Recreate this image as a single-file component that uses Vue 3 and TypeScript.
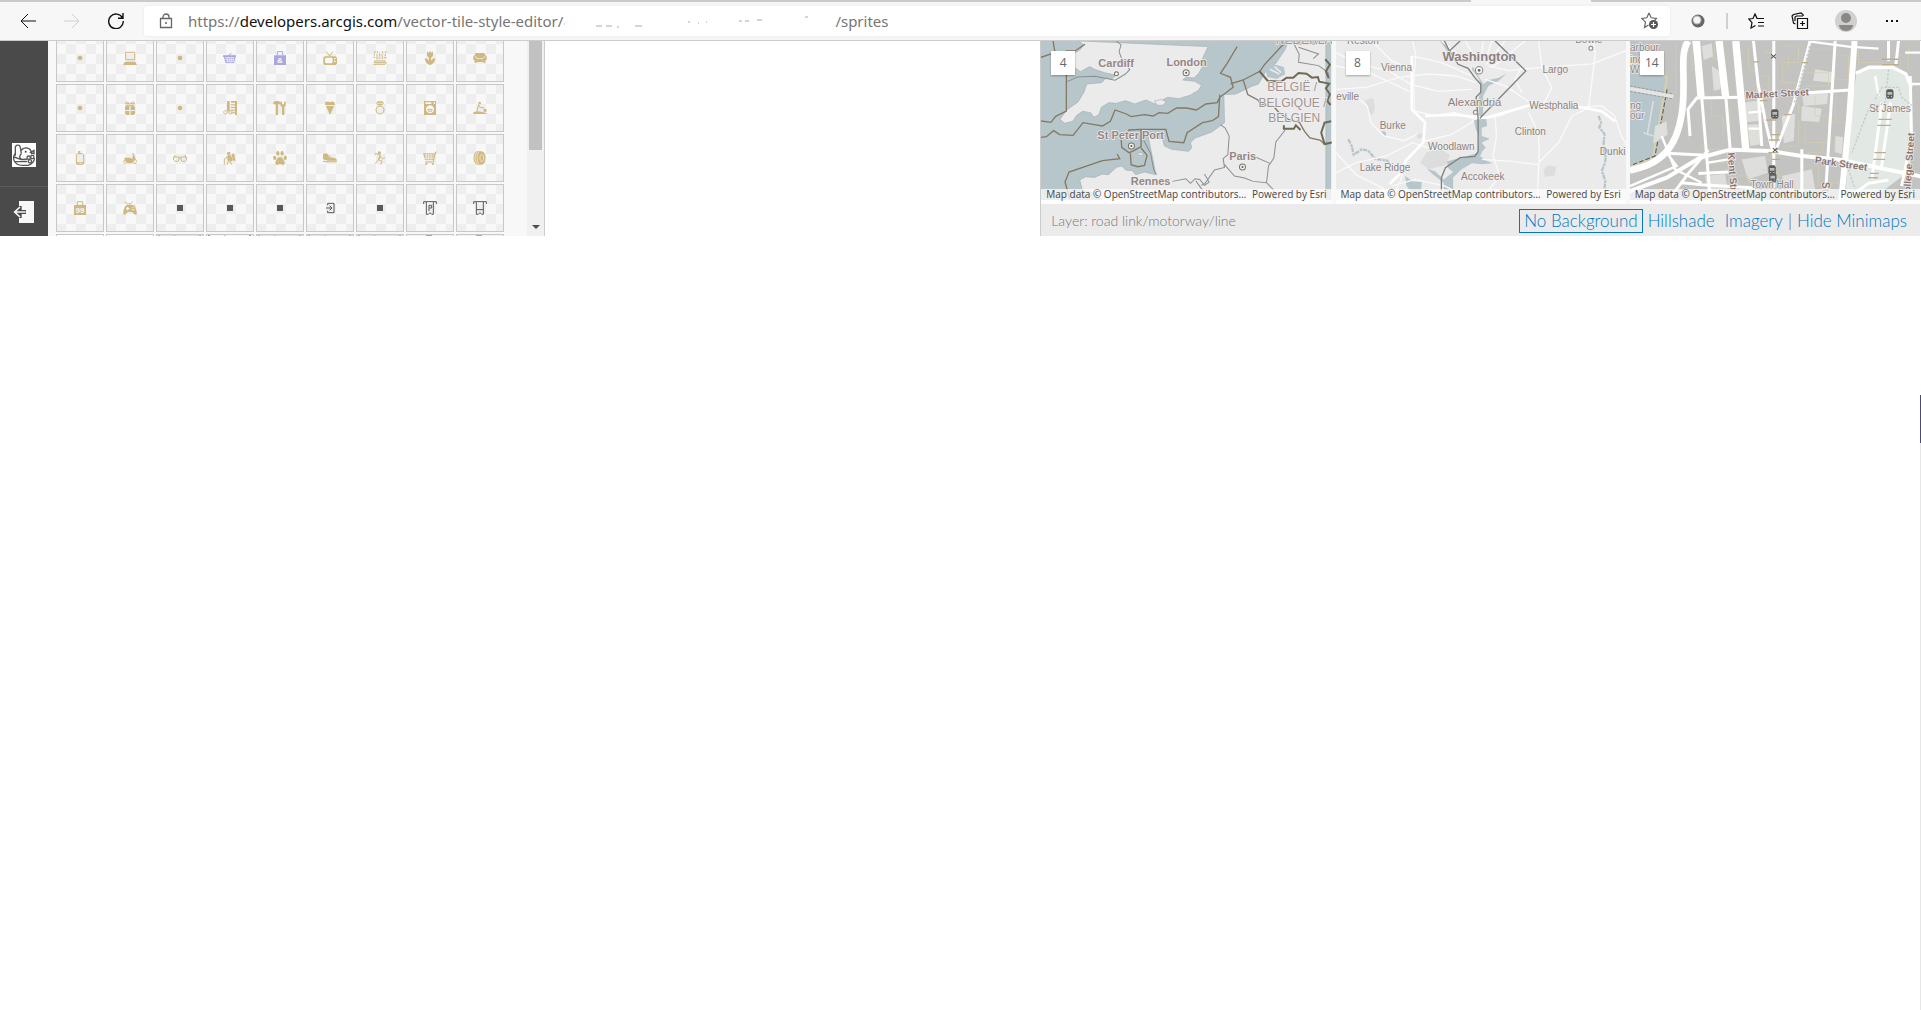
<script setup lang="ts">
interface Glyph {
  name: string
  tone?: string
  fill?: string
  line?: string
  cut?: string
  cutLine?: string
  mark?: string
}

const purple = '#a9a7dc'
const slate = '#595959'

const dot: Glyph = { name: 'dot', fill: 'M21 14a7 7 0 1 0 .1 0z' }
const square: Glyph = { name: 'square', tone: slate, fill: 'M12 12h18v18h-18z' }

const glyphs: Glyph[] = [
  dot,
  { name: 'laptop', line: 'M8 4h27v22h-27z', fill: 'M6 32h30l5 7v3h-40v-3z' },
  dot,
  {
    name: 'basket', tone: purple,
    fill: 'M0 13h39v5h-2l-4 18h-26l-4-18h-3z', line: 'M17 14L25 6',
    cutLine: 'M6 20h27M7 26h25M8 32h23M13 19v15M19 19v15M25 19v15M31 19v15',
  },
  { name: 'shop', tone: purple, fill: 'M3 13h36v29h-36z', line: 'M13 13v-11h16v11', mark: '&' },
  {
    name: 'television',
    fill: 'M5 16h32l5 4v18l-5 4h-32l-4-4v-18z', line: 'M10 2L20 15L29 2',
    cut: 'M9 20h17l3 3v11l-3 3h-17l-3-3v-11zM33 21h5v4h-5zM33 29h5v4h-5z',
  },
  {
    name: 'grill',
    line: 'M2 3h7M13 0v7M18 6h4M29 0v8M34 3h7M4 8v6M9 12h5M20 9v8M25 12h4M37 8v7M1 19h6M12 16v8M17 22h4M28 16v8M33 20h8M4 35h32v-5h-32zM1 40h35l5-6',
  },
  {
    name: 'tulip',
    fill: 'M12 1l5 4 4-5 4 5 5-4v13l-6 6v10c3-5 7-8 13-8c-2 12-7 18-16 20c-9-2-14-8-16-20c6 0 10 3 13 8v-10l-6-6z',
  },
  {
    name: 'sofa',
    fill: 'M8 6h26l4 8h3v12l-4 3v7h-5v-3h-22v3h-5v-7l-4-3v-12h3z',
    cutLine: 'M7 15l5 8h18l5-8',
  },
  dot,
  {
    name: 'gift', fill: 'M9 15h10v12h-13v-9zM23 15h9l4 4v8h-13zM6 30h13v12h-8l-5-5zM23 30h13v8l-5 4h-8z',
    line: 'M20 9c-5-8-12-7-13-1h12M22 9c5-8 12-7 13-1h-12M8 13h26',
  },
  dot,
  {
    name: 'barber', fill: 'M12 0h8v31h-8zM24 0h18v42h-6v-5h-12v-3h12v-5h-12v-3h12v-5h-12v-3h12v-5h-12v-3h12v-5h-12z',
    line: 'M7 29a5 5 0 1 0 .1 0zM22 29a5 5 0 1 0 .1 0z',
  },
  { name: 'tools', fill: 'M1 4l6-4h11l4 6v4h-7v32h-7v-32h-7zM22 1l5 2v7h6v-7l5-2v12l-4 5v24h-7v-24l-5-5z' },
  { name: 'ice-cream', fill: 'M7 12c-3-8 3-14 14-8c9-6 17 0 14 8zM9 15h24l-12 27z' },
  { name: 'ring', line: 'M21 15a12 12 0 1 0 .1 0z', fill: 'M14 1h14l5 5-6 7h-12l-6-7z', cutLine: 'M12 7h18' },
  {
    name: 'washer', fill: 'M3 0h36v42h-36z', cut: 'M7 4h18v5h-18zM32 4h4v5h-4zM21 13a12 12 0 1 0 .1 0z',
    line: 'M14 25h14l-3 6h-8z',
  },
  {
    name: 'massage', fill: 'M20 2a4 4 0 1 0 .1 0zM36 23a5 5 0 1 0 .1 0zM1 33l12-2 16 2 12 4v2h-40z',
    line: 'M17 10L12 30M17 12L22 20L33 20',
  },
  { name: 'phone', line: 'M13 8h16l3 3v26l-3 3h-16l-3-3v-26z', fill: 'M16 0h6v8h-6zM10 34h22v6h-22z', cut: 'M19 36h6v3h-6z' },
  {
    name: 'motorbike', fill: 'M4 20h16l8 3 3-16 5 17-9 13h-12l-9-7z',
    line: 'M7 27a5 5 0 1 0 .1 0zM36 26a6 6 0 1 0 .1 0zM29 6l8 20',
  },
  { name: 'glasses', line: 'M2 20L7 12M40 20L35 12M2 18h16v9l-4 4h-8l-4-4zM24 18h16v9l-4 4h-8l-4-4zM18 20h6' },
  {
    name: 'hiker', fill: 'M17 2a5 5 0 1 0 .1 0zM14 13h10l5 14-6 5-10-4zM26 10l7-3 4 19-7 4z',
    line: 'M15 16L4 25M4 23v18M17 28L12 41M21 30l5 11M33 22l3 8',
  },
  {
    name: 'paw',
    fill: 'M14 0c6-1 8 13 1 13s-7-12-1-13zM28 0c6 1 6 13-1 13s-5-14 1-13zM4 14c6-1 8 12 2 13s-8-12-2-13zM38 14c6 1 4 14-2 13s-4-14 2-13zM21 18c7 0 12 10 14 17c1 7-6 9-10 5h-8c-4 4-11 2-10-5c2-7 7-17 14-17z',
  },
  { name: 'shoe', fill: 'M0 9l11-2 14 12 15 4 2 6h-27l-15-4zM0 29l14 2h28v3h-28l-14-1z', cutLine: 'M15 17l5-4M20 21l5-4' },
  { name: 'runner', fill: 'M19 1a5 5 0 1 0 .1 0z', line: 'M5 13L8 7L23 14L17 26L27 31L23 41M17 26L6 38M20 15l8 8 8-3M21 14L16 25' },
  {
    name: 'cart', fill: 'M0 7h36l-4 20h-26zM10 36a3 3 0 1 0 .1 0zM30 36a3 3 0 1 0 .1 0z', line: 'M41 3h-3l-7 30h-25',
    cutLine: 'M4 12h30M5 18h28M6 23h26M10 8v18M17 8v18M24 8v18',
  },
  {
    name: 'tyre', fill: 'M12 1h15c14 4 14 36 0 40h-15c-14-4-14-36 0-40z',
    cutLine: 'M12 3c-8 8-8 28 0 36M17 3c-6 8-6 28 0 36M26 10c8 2 8 20 0 22c-7-2-7-20 0-22z', line: 'M26 14v14',
  },
  { name: 'sale', fill: 'M3 12h36v30h-36z', line: 'M13 12v-10h16v10', mark: '99' },
  {
    name: 'gamepad', fill: 'M8 14l6-2h14l6 2c5 6 9 20 7 26c-3 3-8 0-13-7h-14c-5 7-10 10-13 7c-2-6 2-20 7-26z',
    line: 'M21 13c0-8-3-4-8-5s-3-6-8-5M22 9c2-5 6-3 7-7', cut: 'M9 21h3v-3h4v3h3v4h-3v3h-4v-3h-3zM29 18h3v4h-3zM26 24h3v4h-3zM32 24h3v4h-3z',
  },
  square,
  square,
  square,
  { name: 'entrance', tone: slate, line: 'M14 13v-6h19v28h-19v-6M9 21h16M20 14l7 7-7 7' },
  square,
  { name: 'parking-sign', tone: slate, line: 'M2 9v-7h38v7M10 3v37h6l5-5 5 5h5v-37M18 30v-17h8v8h-7' },
  { name: 'stop-sign', tone: slate, line: 'M2 9v-7h38v7M10 3v37h6l5-5 5 5h5v-37M10 26h21' },
]

const clipped = ['plain', 'plain', 'road', 'road blue', 'road', 'road', 'road', 'stream', 'stream']

const footerLinks = ['Hillshade', 'Imagery']

const stations = [[468, 220], [813, 160], [460, 388], [462, 411]]
</script>

<template>
  <div class="page">
    <div class="tabstrip"><span class="active-tab"></span></div>
    <header class="toolbar">
      <button class="tool" aria-label="Back">
        <svg width="16" height="16" viewBox="0 0 16 16"><path d="M16 8H1M8 1L1 8l7 7" stroke="#111" /></svg>
      </button>
      <button class="tool" aria-label="Forward" disabled>
        <svg width="16" height="16" viewBox="0 0 16 16"><path d="M0 8h15M8 1l7 7-7 7" stroke="#d0d0d0" /></svg>
      </button>
      <button class="tool" aria-label="Refresh">
        <svg width="16" height="16" viewBox="0 0 16 16"><path d="M14.500 5A7.300 7.300 0 1 0 15.300 8M15 0v5.200H10" stroke="#111" stroke-width="1.400" /></svg>
      </button>
      <div class="address">
        <button class="tool" aria-label="Site information">
          <svg width="14" height="16" viewBox="0 0 14 16">
            <path d="M1.500 5.500h11v9h-11zM4 5.500V4a3 3 0 0 1 6 0v1.500" stroke="#666" stroke-width="1.300" />
            <circle cx="7" cy="10" r="1" fill="#666" />
          </svg>
        </button>
        <div class="url">
          <span>https://<b>developers.arcgis.com</b>/vector-tile-style-editor/</span>
          <svg class="smudge" width="272" height="16" viewBox="0 0 272 16">
            <path d="M1 11h1M33 13h6M43 13h6M54 14h2M72 13h7M125 9h2M135 10h1M143 9h1M176 8h3M182 8h4M194 7h5M242 4h3" stroke="#aaa" />
          </svg>
          <span>/sprites</span>
        </div>
        <button class="tool" aria-label="Add to favorites">
          <svg width="18" height="18" viewBox="0 0 18 18">
            <path d="M8 1l2.200 4.800 5.300.600-2 2M8 1L5.800 5.800.800 6.500l3.700 3.600-1 5.500L7.500 13" stroke="#666" stroke-width="1.200" />
            <circle cx="12.500" cy="12.500" r="4.500" fill="#555" />
            <path d="M12.500 10v5M10 12.500h5" stroke="#fff" stroke-width="1.200" />
          </svg>
        </button>
      </div>
      <button class="tool" aria-label="Extension">
        <svg width="14" height="14" viewBox="0 0 14 14">
          <circle cx="7" cy="7" r="6.500" fill="#666" /><circle cx="6" cy="6" r="4.500" fill="#a8a8a8" />
          <circle cx="6" cy="6" r="3.500" fill="#f4f4f4" />
        </svg>
      </button>
      <span class="separator"></span>
      <button class="tool" aria-label="Favorites">
        <svg width="16" height="16" viewBox="0 0 16 16">
          <path d="M9 5L7 1 5 5.500.800 6l3.200 3.700L3 15l4.500-2.500M7 1l2 4.500h7M10 9.500h6M10 13h6" stroke="#111" stroke-width="1.200" />
        </svg>
      </button>
      <button class="tool" aria-label="Collections">
        <svg width="18" height="18" viewBox="0 0 18 18">
          <path d="M6.500 6.500h10v10h-10zM11.500 9v5M9 11.500h5M4.500 12L2.500 11 1 4l1.500-1.500L10 1l2 1.500.300 1.500M4 9V5l1.500-1H12" stroke="#111" stroke-width="1.200" />
        </svg>
      </button>
      <button class="tool profile" aria-label="Profile">
        <svg width="22" height="22" viewBox="0 0 22 22">
          <circle cx="11" cy="11" r="11" fill="#d2d0ce" /><circle cx="11" cy="8" r="5" fill="#8a8886" />
          <path d="M4 15h14c0 3-3 6-7 6s-7-3-7-6z" fill="#8a8886" />
        </svg>
      </button>
      <button class="tool" aria-label="Settings and more">
        <svg width="14" height="4" viewBox="0 0 14 4"><path d="M1 1h2v2H1zM6 1h2v2H6zM11 1h2v2h-2z" fill="#111" /></svg>
      </button>
    </header>

    <main class="workspace">
      <nav class="rail">
        <button class="rail-button tall" aria-label="Sprites">
          <svg width="24" height="24" viewBox="0 0 72 72">
            <path d="M0 0h72v72H0z" fill="#fff" />
            <g stroke="#555" stroke-width="4">
              <path d="M10 38V14c0-8 14-12 15 0l3 18M28 22c6-10 22-10 28 0l3 12M10 30C-2 48 8 66 30 67h18c12-2 20-14 19-22M6 42l22 8 18-2M28 32c-8 8-6 18 8 18h8M8 56h38M56 28l10-6v10z" />
              <circle cx="50" cy="44" r="5" /><circle cx="61" cy="42" r="5" /><circle cx="54" cy="55" r="5" />
            </g>
            <circle cx="41" cy="26" r="3" fill="#444" />
          </svg>
        </button>
        <button class="rail-button" aria-label="Exit">
          <svg width="22" height="22" viewBox="0 0 66 66">
            <path d="M18 0h45v66H18z" fill="#f8f8f8" />
            <path d="M1 33L18 15h8v12h13v12H26v12h-8z" fill="#4a4a4a" />
            <path d="M38 33H5M21 18L5 33l16 15" stroke="#f8f8f8" stroke-width="5" />
          </svg>
        </button>
      </nav>

      <section class="sprites" aria-label="Sprite list">
        <div class="sprite-view">
          <div class="sprite-grid">
            <button v-for="(g, i) in glyphs" :key="i" class="cell" :aria-label="g.name">
              <svg width="14" height="14" viewBox="0 0 42 42" :style="{ color: g.tone || '#d0b980' }">
                <path v-if="g.fill" :d="g.fill" fill="currentColor" />
                <path v-if="g.cut" :d="g.cut" fill="#f8f8f8" />
                <path v-if="g.line" :d="g.line" stroke="currentColor" stroke-width="3" />
                <path v-if="g.cutLine" :d="g.cutLine" stroke="#f8f8f8" stroke-width="2" />
                <text v-if="g.mark" class="mark" x="21" y="37" text-anchor="middle">{{ g.mark }}</text>
              </svg>
            </button>
            <button v-for="(kind, i) in clipped" :key="kind + i" class="cell" :class="kind" aria-label="sprite"></button>
          </div>
        </div>
        <div class="scrollbar">
          <span class="thumb"></span>
          <svg width="8" height="4" viewBox="0 0 8 4"><path d="M0 0h8L4 4z" fill="#4d4d4d" /></svg>
        </div>
      </section>

      <section class="canvas"></section>

      <section class="maps">
        <div class="minimaps">
          <article class="minimap">
            <svg class="map" viewBox="36 15 870 477" preserveAspectRatio="xMidYMid slice">
              <path d="M36 15h870v477H36z" fill="#b7c6ca" />
              <g fill="#ebebeb" stroke="#a3b0b3" stroke-width="2">
                <path d="M150 15l14 12-10 14-20 12v40l20 14 28-15 14 8 30 10 34 8-10 10-20-2-12 14-45 4-8 24-18 30-34 24-20 28 14 12 24-6 12-18 18-12 24 4 10 14 14-8 8-22 22-14 24 2 26-8 28 10 34-12 26 12 20-10 18-10 34 4 34-10 26-16 8-14-20-12-36-4 10-8 24 2 14-14 10-18-8-14 10-14 16-34z" />
                <path d="M152 432l18-10 26 2 24-10 18 2 24-22 16-4 12 12 20 2 10 12 26-8 34 8-6-34-16-76-2-22 14 22 30 2 6 22 22 10 50 6 10-10-4-16 14-14 50-18 38-28-2-84 36-2 50-24 18-6 22-38 30-24 28-42 6-15h116v477H230l-30-30-40-10z" />
                <path d="M375 196l22-6 14 8-10 10h-16zM325 352l14-2 4 8h-14z" />
              </g>
              <path d="M710 105l24-20 30 8 4 22-26 14-28-6z" fill="#b7c6ca" />
              <path d="M722 100l28 14M736 92l20 18" stroke="#ebebeb" stroke-width="5" />
              <g class="admin">
                <path d="M262 15l14 12-6 20 8 22-8 10 20 4 12 18-14 14-30 18-60-12-52 2-32 14M574 266l14 10 12 24-4 56-14 12 4 26-30 8-28 40-12 6M586 386l30 34 30 6 26 10 40 4 6-50 16-24 6-48 28-36M712 440l20 20 8 30M430 436l40-8 14 14 14-14 14 2 14 18 14-10-14-24M340 305l24 46 10 50 8 14M672 360l50 22M500 434l14 20 20 30M790 15l20 40-2 24 60 10 28 20 4 20M808 34l60 20-16 14" />
              </g>
              <g class="border">
                <path d="M36 64l42-14-6-35M110 45h28l30-20M112 45v180l-32 16-14 18-30-4M36 304l16-2 22-18 18 12 40 2 30-38 34 6 24 4 24-14 14-34 34 12 14 8 40-6 26 4 18-10 26 2 26-16h30l30 6 28-18 34-4 8-16 40-30-8-30-30-12 20-30 18-30 12-20M572 176l-4 66-18 12-30 6-46 30-10 30-44-4-10-36h-76l-34 2-24 22 2 30 22 16 10-4 26-14v-50M336 336l18 22-8 30-20 4-20-6-2-34M264 354l8 14-52 6-100 34-12 30 14 50M604 144l38-12 50-26 14-20 50-54 20-17M642 132l14 44 30 16 10 14 36 4 18 20 30 22 30 6 16 28 16 20 30 6 14 12 26-6" />
              </g>
              <path class="thick-border" d="M690 105l26 30 40 2 16-12h20l16-14 24 2 16 12 18-2 4 14 30 6-10 14 12 18-8 20 10 12M906 256l-20 4-10 30 10 34 20-4M764 268v10h30l6-10 14 14M888 70l14 16-12 20 8 20" />
              <g class="city bold">
                <text x="208" y="92">Cardiff</text><text x="412" y="89">London</text>
                <text x="205" y="308">St Peter Port</text><text x="600" y="371">Paris</text><text x="305" y="448">Rennes</text>
              </g>
              <g class="country">
                <text x="740" y="25">NEDERLAND</text><text x="714" y="166">BELGIË /</text>
                <text x="688" y="212">BELGIQUE /</text><text x="717" y="258">BELGIEN</text>
              </g>
              <g fill="#f4f4f0" stroke="#777466" stroke-width="3">
                <circle cx="262" cy="113" r="6" /><circle cx="471" cy="110" r="9" /><circle cx="307" cy="330" r="9" /><circle cx="640" cy="393" r="9" />
              </g>
              <g fill="#555"><circle cx="471" cy="110" r="3" /><circle cx="307" cy="330" r="3" /><circle cx="640" cy="393" r="3" /></g>
            </svg>
            <span class="zoom-level">4</span>
            <footer class="credit"><span class="source">Map data © OpenStreetMap contributors…</span><span>Powered by Esri</span></footer>
          </article>

          <article class="minimap">
            <svg class="map" viewBox="33 15 870 477" preserveAspectRatio="xMidYMid slice">
              <path d="M33 15h870v477H33z" fill="#ebebeb" />
              <path d="M120 192l24-6 6 30-8 22-12-12zM285 380l20-32 40-10 30 20-14 30-50 12zM655 402l14-14 24 4-4 26-30 4zM270 296l26-6 4 12-20 6z" fill="#dcdddd" />
              <g fill="#b7c6ca">
                <path d="M440 100L462 130L468 160L460 190L462 248L446 252L452 280L462 300L458 350L420 362L366 376L368 395L384 408L356 430L330 406L306 398L322 414L356 440L356 492H384L384 424L410 400L440 382L470 385L502 382L480 372L465 360L472 345L482 335L470 320L494 308L470 300L470 275L486 270L484 250L474 245L474 180L490 150L520 135L545 112L520 126L490 132L475 145L465 128L442 92z" />
                <path d="M345 15h10l18 26-4 8zM240 420l24 16 26 2-2 30-14 24-30-44zM168 284l14 4 2 12-8-2z" />
              </g>
              <path d="M70 310l10 20 6 26 24-16 20 4 20 24 36 6 10 12M820 240l8 20-6 14 16 20-4 40 8 30-4 20-8 20 10 30-2 26" stroke="#b7c6ca" stroke-width="7" stroke-dasharray="14 3 8 2" />
              <g stroke="#fafafa" stroke-width="4">
                <path d="M33 50l60 30 100 26 66 40 80 20 100-6M140 15l60 60 70 30M33 160l90-6 100-30 90-10 80 6 60 20M33 180l70 10 24 20 10 50 40 40 60 14 40-20M262 15l10 40-6 80 2 90 30 30v60l-60 66-10 50-30 60M268 225l60 14 60-10 60 20 80-10 70-30 90-6 90 10 50-4 40 30 20 60 24 40M300 315l80-20 60-36 18-20M420 15l30 50M350 15l60 50M474 15l-6 60M500 15l-20 60M540 15l-56 70M600 15l-100 80M640 15l10 80 30 60-30 60M490 90l60 14 100-10 150-10 103-40M480 130l60 20 60 40 30 20M510 240l4 60-10 60 20 60-40 50M610 230l30 60 2 70-6 140M640 380l60-60 40-80 50-24 10-80 10-80-6-40M470 370l90 6 80 10M33 350l60 66 80 40 20 36M33 410l60-30 90-20 80-40 60 20 130-10M200 450l70-20 90 20 60 30 90-20 110 20M260 60l90 20 90 40M590 90l-20 40 20 40M33 90l100 20 120 56" />
              </g>
              <path d="M260 60v160l40 40-6 60-52 54-8 30-40 40M300 240l90-4 90 10 140-40 160 10 50 10 40 30" stroke="#fff" stroke-width="8" />
              <path d="M358 15l15 30 32-30M510 15l92 90-138 142M373 45l26 40 30 12 20 28 18 20v24l-14 14 6 64v100l-10 14-44 4-44 30-12 30v40" stroke="#808080" stroke-width="4" />
              <g class="town">
                <text x="66" y="25">Reston</text><text x="168" y="105">Vienna</text><text x="652" y="111">Largo</text>
                <text x="750" y="22">Bowie</text><text x="34" y="191">eville</text><text x="612" y="219">Westphalia</text>
                <text x="164" y="279">Burke</text><text x="569" y="296">Clinton</text><text x="309" y="342">Woodlawn</text>
                <text x="104" y="404">Lake Ridge</text><text x="824" y="356">Dunkirk</text><text x="408" y="432">Accokeek</text>
              </g>
              <text class="town large" x="368" y="210">Alexandria</text>
              <text class="capital" x="352" y="76">Washington</text>
              <g fill="#f4f4f0" stroke="#8a8684" stroke-width="3">
                <circle cx="462" cy="103" r="11" /><circle cx="451" cy="229" r="6" /><circle cx="797" cy="37" r="6" />
              </g>
              <circle cx="462" cy="103" r="4" fill="#666" />
            </svg>
            <span class="zoom-level">8</span>
            <footer class="credit"><span class="source">Map data © OpenStreetMap contributors…</span><span>Powered by Esri</span></footer>
          </article>

          <article class="minimap">
            <svg class="map" viewBox="45 15 870 477" preserveAspectRatio="xMidYMid slice">
              <path d="M45 15h870v477H45z" fill="#c3c3c1" />
              <path d="M45 15h45l8 80 55 30-8 60-30 180-70 28z" fill="#b7c6ca" />
              <path d="M98 60l8 38 50 26-14 80-28 160-66 28" stroke="#d8d0ac" stroke-width="6" />
              <path d="M156 160l-36 200-72 28" stroke="#555" stroke-width="3" stroke-dasharray="14 6" />
              <path d="M45 158l130 24" stroke="#e4e4e4" stroke-width="12" /><path d="M45 150l130 24M45 166l126 22" stroke="#888" stroke-width="2" stroke-dasharray="8 4" />
              <path d="M115 195l-18 100M85 290l30 10" stroke="#ddd" stroke-width="5" />
              <path d="M724 112l40-18h70l40 20 16 50-6 240-120 90H690l14-250z" fill="#e2e8e4" />
              <g fill="#dededc">
                <path d="M120 270l34-14 4 40-44 26zM260 30l30-8 4 40-28 10zM376 200l50-6 10 60-54 6zM396 266l40-2 4 60-34 6zM290 90l30 20-4 50-20 4zM560 170l80-6-4 40-70 6zM600 100l60 10-6 30-60-6zM270 420l60-6 10 60-60 4zM380 370l70-10 8 50-60 20zM500 240l40-6-4 80-30 8zM560 210l60 8-8 40-54-4zM500 420l90-20 10 60-80 10zM660 300l24 4-4 50-22-6z" />
              </g>
              <g stroke="#d6cfab" stroke-width="2">
                <path d="M230 40v60h24v80M290 190v50h34v60M400 30v70l24 8v70M500 30h50v50h-48v60h40v40M570 110h70v40h-70M600 180v60h40v80h-70v-60M500 330h50v-80M280 340h60v40h-60M400 270v60M660 60h40v70h-40v-30M880 30v70M730 40v40h60M360 420h40v50M440 400l50 10v50M560 390h50v60M250 400h30v70M660 180v80h30M660 290v60M430 120h30v60M520 60v40M590 40h60M445 50h24" />
                <path d="M298 20v50h10M345 200v60M360 110v50M420 195h24v30M520 200h30v30M575 350h48v-30M480 460h70M330 440h50M640 440h30M200 20l20 40M220 230v80M256 320l14 20" />
              </g>
              <g stroke="#fff">
                <path d="M236 15l24 170 26 307" stroke-width="9" />
                <path d="M244 15l14 170" stroke-width="22" />
                <path d="M312 15l20 170" stroke-width="22" /><path d="M332 180l14 170" stroke-width="9" />
                <path d="M362 15l30 325" stroke-width="22" />
                <path d="M220 15c-30 40-4 120-20 220s-60 150-155 168" stroke-width="20" />
                <path d="M718 15l-16 230-24 247" stroke-width="18" />
                <path d="M45 465l110-40 100-60 90-24 120 4 90 14 120 12 240 50" stroke-width="12" />
                <path d="M225 300l-6-80 26-34 135-2M575 170l130-8M415 15l14 130 26 130 20 80M476 15v440M585 15l-50 190-50 130M660 15l-10 160-20 317M560 340v150M430 180l10 150M820 15v60M850 15l-8 70M885 120l4 190-30 140M155 352l120 6M160 492l60-80 60-70M250 412l90-4M200 440l60 6 160 10M690 492l70-50 60-10" stroke-width="9" />
                <path d="M45 450l140-60-30-40M140 300l40 100 80 40M580 16l120 16 90 6M400 230l40-4M400 278h36M340 370l-60 10M780 120l10 60M870 50h45M890 144h25" stroke-width="7" />
                <path d="M722 112l40-18h70l40 20 16 40" stroke-width="10" />
                <path d="M800 200l-30 230M826 200l-28 200" stroke-width="9" />
              </g>
              <path d="M820 100l-10 100-50 20-50 130M780 190l20-36h50l10 30 30 24M700 400l20 60M182 30v140M584 30l-46 170" stroke="#c8ccca" stroke-width="4" stroke-dasharray="8 4" />
              <path d="M760 425h28M764 412h26M790 250h40M786 268h40M778 350h34M774 370h36M800 70h50M800 86h50M468 296h28M462 312h32M460 350h30M414 78h18M434 194h24M452 252h30M560 80h20M508 236h20M470 370h24" stroke="#beae88" stroke-width="4" />
              <path d="M468 55l14 12M482 55l-14 12M473 336l14 12M487 336l-14 12" stroke="#555" stroke-width="3" />
              <g v-for="p in stations" :key="p[0]" :transform="`translate(${p[0]} ${p[1]})`">
                <path d="M4 0h14l4 5v18l-4 5H4l-4-5V5z" fill="#5c5c5c" /><path d="M4 8h14v8H4zM4 20h4v3H4zM14 20h4v3h-4z" fill="#bbb" />
              </g>
              <g class="street">
                <text transform="translate(392 188) rotate(-3)">Market Street</text>
                <text transform="translate(598 382) rotate(8)">Park Street</text>
                <text transform="translate(338 350) rotate(86)">Kent Street</text>
                <text transform="translate(884 492) rotate(-86)">College Street</text>
                <text transform="translate(622 438) rotate(90)">St</text>
              </g>
              <g class="town">
                <text x="406" y="455">Town Hall</text><text x="762" y="229">St James</text>
                <text x="45" y="46">arbour</text><text x="45" y="80">ing</text><text x="45" y="110">Wharf</text>
                <text x="45" y="219">ng</text><text x="45" y="250">our</text>
              </g>
            </svg>
            <span class="zoom-level">14</span>
            <footer class="credit"><span class="source">Map data © OpenStreetMap contributors…</span><span>Powered by Esri</span></footer>
          </article>
        </div>

        <footer class="status">
          <span class="layer">Layer: road link/motorway/line</span>
          <nav class="options">
            <a href="#" class="selected">No Background</a>
            <a v-for="label in footerLinks" :key="label" href="#">{{ label }}</a>
            <span class="bar">|</span>
            <a href="#">Hide Minimaps</a>
          </nav>
        </footer>
      </section>
    </main>

    <div class="rest"><span class="edge"></span></div>
  </div>
</template>

<style>
body {
  margin: 0;
  background: #fff;
}
</style>

<style scoped>
.page {
  display: flex;
  flex-direction: column;
  min-height: 100vh;
  font-family: Lato, "Liberation Sans", sans-serif;
  overflow: hidden;
}
svg {
  fill: none;
  flex: none;
}
button {
  padding: 0;
  border: 0;
  background: none;
}
.tabstrip {
  display: flex;
  justify-content: flex-end;
  height: 2px;
  padding-right: 330px;
  background: #cacaca;
}
.active-tab {
  width: 120px;
  background: #f7f7f7;
}
.toolbar {
  display: flex;
  align-items: center;
  height: 38px;
  padding: 0 7px 0 6px;
  background: #f7f7f7;
  border-bottom: 1px solid #ccc;
}
.tool {
  display: flex;
  flex: none;
  align-items: center;
  justify-content: center;
  width: 44px;
  height: 30px;
}
.tool.profile {
  width: 48px;
}
.address {
  display: flex;
  flex: 1;
  align-items: center;
  height: 30px;
  margin: 0 6px;
  border-radius: 3px;
  background: #fff;
  box-shadow: 0 0 3px #e6e6e6;
}
.address .tool:last-child {
  width: 40px;
}
.url {
  display: flex;
  flex: 1;
  align-items: center;
  font: 15px/20px "Noto Sans", "Open Sans", sans-serif;
  color: #767676;
  white-space: nowrap;
}
.url b {
  font-weight: 400;
  color: #111;
}
.separator {
  width: 2px;
  height: 16px;
  margin: 0 6px;
  background: #d0d0d0;
}
.workspace {
  display: flex;
}
.rail {
  display: flex;
  flex: none;
  flex-direction: column;
  justify-content: flex-end;
  width: 48px;
  background: #4a4a4a;
}
.rail-button {
  display: flex;
  align-items: center;
  justify-content: center;
  height: 50px;
  border-top: 1px solid #5c5c5c;
}
.rail-button.tall {
  height: 62px;
  border-top: 0;
}
.sprites {
  display: flex;
  flex: none;
  justify-content: space-between;
  box-sizing: border-box;
  width: 497px;
  background: #f8f8f8;
  border-right: 1px solid #ccc;
}
.sprite-view {
  height: 195px;
  padding-left: 8px;
  overflow: hidden;
}
.sprite-grid {
  display: grid;
  grid-template-columns: repeat(9, 48px);
  gap: 2px;
  margin-top: -7px;
}
.cell {
  display: flex;
  align-items: center;
  justify-content: center;
  box-sizing: border-box;
  height: 48px;
  border: 1px solid #c8c8c8;
  background: repeating-conic-gradient(#f8f8f8 0 25%, #eee 0 50%) -1px -1px / 20px 20px;
}
.cell.plain {
  background: #fff;
}
.cell.road {
  background: linear-gradient(90deg, transparent 1px, #c9c34e 1px 3px, transparent 3px 17px, #d4d09a 17px 19px, transparent 19px 42px, #c9c34e 42px 44px, transparent 44px), #dfe4dc;
}
.cell.road.blue {
  background: linear-gradient(90deg, transparent 1px, #7f9fc4 1px 3px, transparent 3px 17px, #c5cfdc 17px 19px, transparent 19px 42px, #7f9fc4 42px 44px, transparent 44px), #f4f6f8;
}
.cell.stream {
  background: linear-gradient(90deg, transparent 19px, #7db2de 19px 25px, transparent 25px), #eef3f6;
}
.mark {
  font: bold 24px "Liberation Sans", sans-serif;
  fill: #f8f8f8;
}
.scrollbar {
  display: flex;
  flex-direction: column;
  align-items: center;
  justify-content: space-between;
  box-sizing: border-box;
  width: 17px;
  padding-bottom: 7px;
  background: #f0f0f0;
}
.thumb {
  width: 13px;
  height: 109px;
  background: #c1c1c1;
}
.canvas {
  flex: 31 1 0;
}
.maps {
  display: flex;
  flex: 55 1 0;
  flex-direction: column;
  box-sizing: border-box;
  min-width: 0;
  border-right: 1px solid #fff;
  border-left: 1px solid #ccc;
  background: #ebebeb;
}
.minimaps {
  display: flex;
  gap: 4px;
  background: #f8f8f8;
}
.minimap {
  position: relative;
  flex: 1;
  min-width: 0;
  height: 163px;
}
.map {
  display: block;
  width: 100%;
  height: 159px;
}
.map text {
  font-family: "Liberation Sans", sans-serif;
  stroke: #f2f0ef;
  stroke-width: 4px;
  paint-order: stroke;
  fill: #8c8280;
}
.city.bold text {
  font-size: 33px;
  font-weight: bold;
  fill: #948785;
}
.country text {
  font-size: 36px;
  fill: #a09493;
}
.town text {
  font-size: 30px;
}
.map .large {
  font-size: 34px;
}
.map .capital {
  font-size: 39px;
  font-weight: bold;
}
.street text {
  font-size: 30px;
  font-weight: bold;
  fill: #8a7673;
}
.admin {
  stroke: #8a8f90;
  stroke-width: 3px;
}
.border {
  stroke: #847963;
  stroke-width: 4px;
}
.thick-border {
  stroke: #6f6a54;
  stroke-width: 6px;
}
.zoom-level {
  position: absolute;
  top: 10px;
  left: 10px;
  width: 24px;
  background: #fff;
  box-shadow: 0 1px 2px rgba(0, 0, 0, 0.3);
  color: #666;
  font: 12px/24px "Open Sans", sans-serif;
  text-align: center;
}
.credit {
  position: absolute;
  right: 0;
  bottom: 0;
  left: 0;
  display: flex;
  justify-content: space-between;
  padding: 0 5px 4px;
  background: rgba(255, 255, 255, 0.7);
  color: #444;
  font: 10px/11px "Open Sans", sans-serif;
  white-space: nowrap;
}
.status {
  display: flex;
  align-items: center;
  justify-content: space-between;
  height: 32px;
  padding: 0 8px 0 10px;
}
.layer {
  color: #777;
  font-size: 14px;
  font-weight: 300;
}
.options {
  display: flex;
  align-items: center;
  margin-top: 2px;
  font-size: 17px;
  font-weight: 300;
  line-height: 22px;
  white-space: nowrap;
}
.options a {
  padding: 0 4px;
  border: 1px solid transparent;
  color: #0079c1;
  text-decoration: none;
}
.options a.selected {
  border-color: #0079c1;
}
.bar {
  color: #555;
}
.rest {
  display: flex;
  flex: 1;
  justify-content: flex-end;
  padding-top: 159px;
}
.edge {
  width: 1px;
  background: linear-gradient(#4b4a72 48px, #e6e6e6 48px);
}
</style>
